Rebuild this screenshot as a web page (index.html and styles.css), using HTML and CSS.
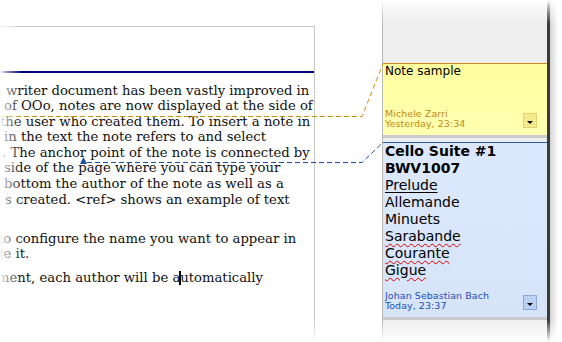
FILE: index.html
```html
<!DOCTYPE html>
<html lang="en">
<head>
<meta charset="utf-8">
<title>Notes in Writer</title>
<link rel="stylesheet" href="styles.css">
</head>
<body>
<div class="screen">
  <div class="doc">
    <div class="page">
      <div class="page-header"></div>
      <div class="page-body">
        <p class="para">
          <span class="ln i1">a writer document has been vastly improved in</span>
          <span class="ln i2">of OOo, notes are now displayed at the side of</span>
          <span class="ln i3">the user who created them. To insert a note in</span>
          <span class="ln i4">in the text the note refers to and select</span>
          <span class="ln i5">. The anchor point of the note is connected by</span>
          <span class="ln i6">side of the page where you can type your</span>
          <span class="ln i7">bottom the author of the note as well as a</span>
          <span class="ln i8">s created. &lt;ref&gt; shows an example of text</span>
          <span class="ln">&nbsp;</span>
        </p>
        <p class="para">
          <span class="ln i10">to configure the name you want to appear in</span>
          <span class="ln i11">ge it.</span>
        </p>
        <p class="para">
          <span class="ln i12">ment, each author will be a<span class="caret"></span>utomatically</span>
        </p>
      </div>
    </div>
  </div>
  <div class="gutter"></div>
  <aside class="sidebar">
    <div class="note note-yellow">
      <div class="note-body">Note sample</div>
      <div class="note-foot">
        <div class="meta">
          <div>Michele Zarri</div>
          <div>Yesterday, 23:34</div>
        </div>
        <div class="menu-btn"><span class="arrow"></span></div>
      </div>
    </div>
    <div class="note note-blue">
      <div class="note-body">
        <div class="title">Cello Suite #1</div>
        <div class="title">BWV1007</div>
        <div class="link">Prelude</div>
        <div>Allemande</div>
        <div>Minuets</div>
        <div><span class="spell">Sarabande</span></div>
        <div><span class="spell">Courante</span></div>
        <div><span class="spell">Gigue</span></div>
      </div>
      <div class="note-foot">
        <div class="meta">
          <div>Johan Sebastian Bach</div>
          <div>Today, 23:37</div>
        </div>
        <div class="menu-btn"><span class="arrow"></span></div>
      </div>
    </div>
  </aside>
  <div class="frame-edge"></div>
  <div class="frame-shadow"></div>

  <svg class="connectors" width="562" height="342" viewBox="0 0 562 342">
    <polyline class="line-yellow" points="0,116.5 362,116.5 383,64"/>
    <polygon class="anchor-blue" points="80,164 87,164 83.5,157"/>
    <polyline class="line-blue" points="87,162.5 362,162.5 383,142.5"/>
  </svg>

  <div class="fade fade-left"></div>
  <div class="fade fade-top"></div>
  <div class="fade fade-bottom"></div>
</div>
</body>
</html>
```

FILE: styles.css
```css
* { box-sizing: border-box; }
html, body { margin: 0; padding: 0; }
body { width: 562px; height: 342px; overflow: hidden; background: #fff; }

.screen {
  position: relative;
  width: 562px;
  height: 342px;
  display: flex;
  overflow: hidden;
  background: #fff;
}

/* document page */
.doc { width: 315px; flex: none; padding-top: 26px; }
.page {
  height: 100%;
  border-top: 1px solid #c6c6c6;
  border-right: 1px solid #c6c6c6;
  overflow: hidden;
}
.page-header { height: 46px; border-bottom: 2px solid #000080; }
.page-body {
  padding-top: 9.5px;
  font-family: "DejaVu Serif", serif;
  font-size: 13.2px;
  line-height: 15.6px;
  color: #111;
}
.para { margin: 0 0 8px; }
.ln { display: block; white-space: nowrap; }
.i1 { text-indent: -6px; }
.i2 { text-indent: 4px; }
.i3 { text-indent: 0; }
.i4 { text-indent: 4px; }
.i5 { text-indent: 2px; }
.i6 { text-indent: 4px; }
.i7 { text-indent: 4px; }
.i8 { text-indent: 5px; }
.i10 { text-indent: -2px; }
.i11 { text-indent: -5px; }
.i12 { text-indent: -3px; }

.caret {
  display: inline-block;
  width: 2px;
  height: 14px;
  margin: 0 -1px;
  background: #000;
  vertical-align: -3px;
}

.gutter { width: 67px; flex: none; }

/* notes sidebar */
.sidebar {
  width: 165px;
  flex: none;
  border-left: 1px solid #b8b8b8;
  background: #eeeeee;
  padding-top: 63px;
  display: flex;
  flex-direction: column;
  gap: 7px;
}
.note {
  display: flex;
  flex-direction: column;
  font-family: "DejaVu Sans", sans-serif;
  padding: 0 10px 7px 2px;
  box-shadow: 0 3px 0 #cacaca;
}
.note-body { flex: 1; }
.note-foot {
  display: flex;
  align-items: flex-end;
  justify-content: space-between;
}
.meta {
  font-size: 9.5px;
  line-height: 9.5px;
  letter-spacing: 0.05px;
}
.menu-btn {
  width: 14px;
  height: 15px;
  border: 1px solid;
  display: flex;
  align-items: flex-end;
  justify-content: center;
  padding-bottom: 3px;
}
.arrow {
  width: 0;
  height: 0;
  border-left: 3px solid transparent;
  border-right: 3px solid transparent;
  border-top: 3px solid #000;
}

.note-yellow {
  height: 72px;
  border-top: 1px solid #c8901a;
  background: linear-gradient(#ffff9e, #ffffb2);
}
.note-yellow .note-body { font-size: 12px; line-height: 14px; color: #000; }
.note-yellow .meta { color: #c28c12; }
.note-yellow .menu-btn { background: #f4ec8c; border-color: #e2d372; }

.note-blue {
  height: 175px;
  border-top: 1px solid #2a5aa8;
  background: linear-gradient(#dce8fd, #d6e4fa);
}
.note-blue .note-body { font-size: 14px; line-height: 17px; color: #000; }
.note-blue .title { font-weight: bold; }
.note-blue .link { text-decoration: underline; text-underline-offset: 2px; }
.note-blue .spell {
  text-decoration: underline wavy #e00000;
  text-decoration-thickness: 1px;
  text-underline-offset: 2px;
}
.note-blue .meta { color: #1f4fb8; }
.note-blue .menu-btn { background: #bcd0f2; border-color: #8ca8d8; }

/* window frame edge on the right */
.frame-edge { width: 3px; flex: none; background: #3a3a3a; }
.frame-shadow { flex: 1; background: linear-gradient(to right, #d4d4d4, #fff 8px); }

/* connector lines between anchors and notes */
.connectors {
  position: absolute;
  left: 0;
  top: 0;
  pointer-events: none;
}
.line-yellow { fill: none; stroke: #c8900f; stroke-width: 1; stroke-dasharray: 5 3; }
.line-blue { fill: none; stroke: #1f4e9a; stroke-width: 1; stroke-dasharray: 5 3; }
.anchor-blue { fill: #1f4e9a; }

/* vignette fades of the screenshot */
.fade { position: absolute; pointer-events: none; }
.fade-left {
  left: 0; top: 0; bottom: 0; width: 24px;
  background: linear-gradient(to right, #fff 0, rgba(255,255,255,0.6) 6px, rgba(255,255,255,0) 22px);
}
.fade-top {
  left: 0; right: 0; top: 0; height: 24px;
  background: linear-gradient(#fff 0, rgba(255,255,255,0.5) 10px, rgba(255,255,255,0) 24px);
}
.fade-bottom {
  left: 0; right: 0; bottom: 0; height: 22px;
  background: linear-gradient(rgba(255,255,255,0), #fff);
}
```
